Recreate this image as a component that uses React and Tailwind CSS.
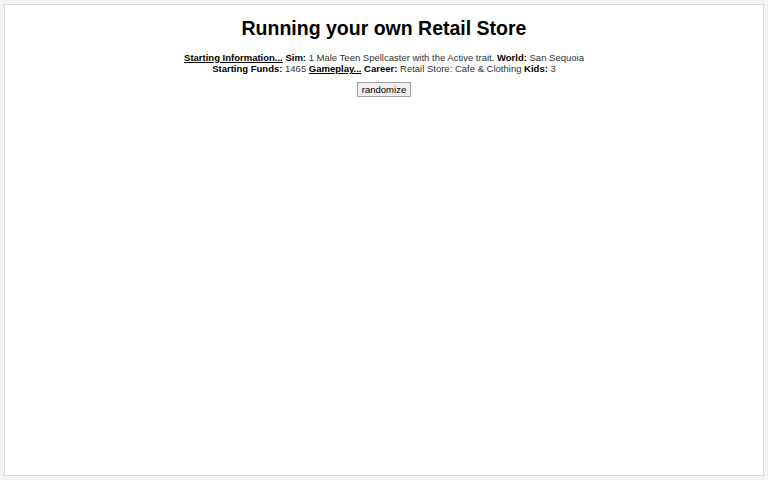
export default function App() {
  return (
    <div className="min-h-[480px] bg-[#f4f4f4] p-[4px] font-['Liberation_Sans',Arial,sans-serif] text-black">
      <div className="h-[472px] border border-[#dddddd] bg-white text-center">
        <h1 className="pt-[10px] text-[19.5px] font-bold leading-[26px]">Running your own Retail Store</h1>
        <div className="mt-[11px] text-[9.5px] leading-[11px] text-[#333]">
          <p>
            <b className="text-black underline">Starting Information...</b>{" "}
            <b className="text-black">Sim:</b> 1 Male Teen Spellcaster with the Active trait.{" "}
            <b className="text-black">World:</b> San Sequoia
          </p>
          <p>
            <b className="text-black">Starting Funds:</b> 1465{" "}
            <b className="text-black underline">Gameplay...</b>{" "}
            <b className="text-black">Career:</b> Retail Store: Cafe &amp; Clothing{" "}
            <b className="text-black">Kids:</b> 3
          </p>
        </div>
        <button className="mt-[8px] border border-[#a0a0a0] bg-[#f0f0f0] px-[4px] text-[9.5px] leading-[13px] text-black">
          randomize
        </button>
      </div>
    </div>
  );
}
